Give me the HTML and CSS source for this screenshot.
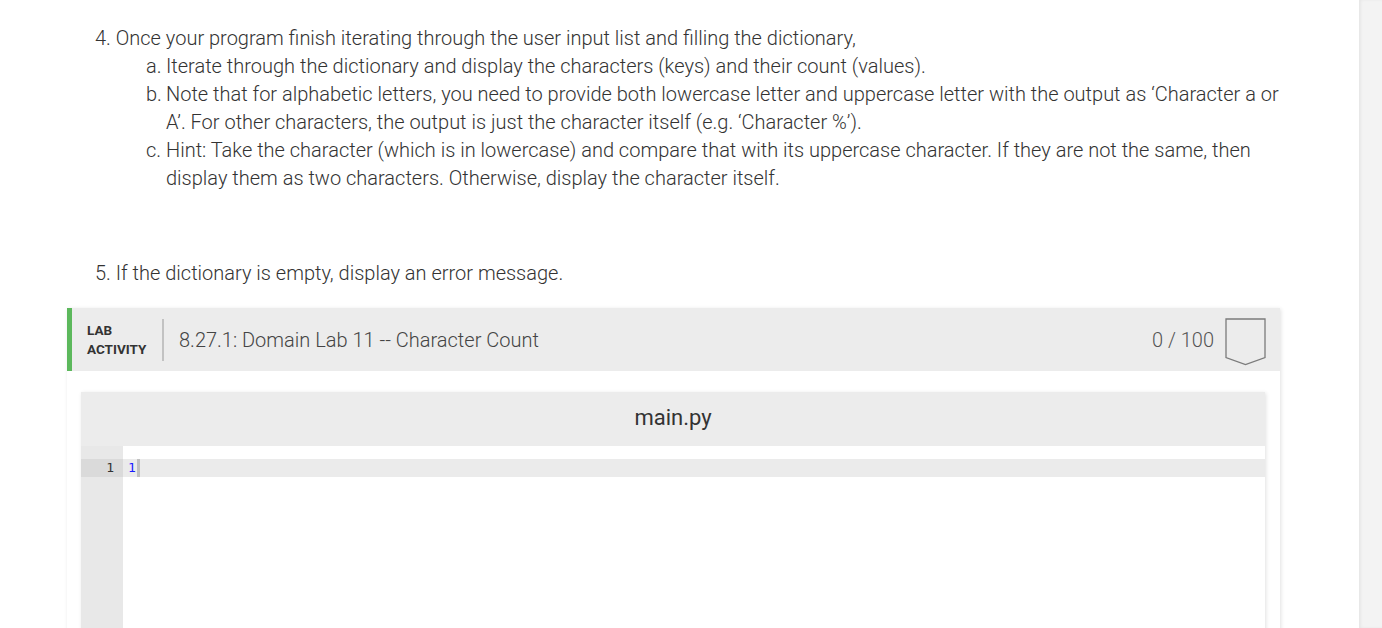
FILE: index.html
```html
<!DOCTYPE html>
<html>
<head>
<meta charset="utf-8">
<link rel="stylesheet" href="styles.css">
</head>
<body>
<div class="page">
  <main class="main">
    <div class="instructions">
      <div class="step">4. Once your program finish iterating through the user input list and filling the dictionary,</div>
      <div class="sub">
        <div class="sub-item"><span class="mk">a.</span><span class="tx">Iterate through the dictionary and display the characters (keys) and their count (values).</span></div>
        <div class="sub-item"><span class="mk">b.</span><span class="tx">Note that for alphabetic letters, you need to provide both lowercase letter and uppercase letter with the output as ‘Character a or A’. For other characters, the output is just the character itself (e.g. ‘Character %’).</span></div>
        <div class="sub-item"><span class="mk">c.</span><span class="tx">Hint: Take the character (which is in lowercase) and compare that with its uppercase character. If they are not the same, then display them as two characters. Otherwise, display the character itself.</span></div>
      </div>
      <div class="step step5">5. If the dictionary is empty, display an error message.</div>
    </div>

    <section class="card">
      <header class="card-head">
        <div class="label">LAB<br>ACTIVITY</div>
        <div class="divider"></div>
        <div class="title">8.27.1: Domain Lab 11 -- Character Count</div>
        <div class="score">0 / 100</div>
        <svg class="badge" width="42" height="48" viewBox="0 0 42 48">
          <path d="M1 1 H40 V39.5 L20.5 46.5 L1 39.5 Z" fill="none" stroke="#7b7b7b" stroke-width="1.3"/>
        </svg>
      </header>
      <div class="card-body">
        <div class="editor">
          <div class="editor-head">main.py</div>
          <div class="code">
            <div class="gutter">
              <div class="gutter-pad"></div>
              <div class="ln active">1</div>
            </div>
            <div class="lines">
              <div class="gutter-pad"></div>
              <div class="line active"><span class="num">1</span><span class="cursor"></span></div>
            </div>
          </div>
        </div>
      </div>
    </section>
  </main>
  <aside class="side"></aside>
</div>
</body>
</html>
```

FILE: styles.css
```css
html, body {
  margin: 0;
  padding: 0;
  background: #ffffff;
}
body {
  font-family: Roboto, "Liberation Sans", sans-serif;
  color: #333333;
  overflow: hidden;
  height: 628px;
}
.page {
  display: flex;
  height: 628px;
}
.main {
  flex: 1;
  padding: 24px 0 0 67px;
}
.side {
  width: 23px;
  background: #f3f3f3;
  box-shadow: inset 2px 0 3px rgba(0, 0, 0, 0.05);
}
.instructions {
  width: 1213px;
  font-size: 20px;
  font-weight: 300;
  line-height: 28px;
  color: #333333;
}
.step {
  padding-left: 28px;
}
.sub {
  padding-left: 79px;
}
.sub-item {
  display: flex;
}
.mk {
  width: 20px;
  flex: none;
}
.tx {
  flex: 1;
}
.step5 {
  margin-top: 67px;
}
.card {
  width: 1213px;
  margin-top: 21px;
  box-shadow: 1px 1px 4px rgba(0, 0, 0, 0.12);
  background: #fff;
}
.card-head {
  display: flex;
  align-items: center;
  height: 63px;
  background: #ececec;
  border-left: 5px solid #5cb85c;
  padding: 0 13px 0 15px;
}
.label {
  font-size: 13.5px;
  font-weight: 700;
  line-height: 19px;
  color: #333;
  width: 75px;
}
.divider {
  width: 2px;
  height: 42px;
  background: #c2c2c2;
  margin-right: 15px;
}
.title {
  flex: 1;
  font-size: 20px;
  font-weight: 300;
  color: #444;
}
.score {
  font-size: 20px;
  font-weight: 300;
  color: #555;
  margin-right: 11px;
}
.badge {
  display: block;
  margin-top: 4px;
}
.card-body {
  padding: 21px 15px 0 14px;
  height: 300px;
}
.editor {
  box-shadow: 1px 1px 4px rgba(0, 0, 0, 0.12);
  height: 300px;
  background: #fff;
}
.editor-head {
  height: 54px;
  padding-bottom: 3px;
  box-sizing: border-box;
  background: #ececec;
  font-size: 22px;
  font-weight: 400;
  color: #333;
  display: flex;
  align-items: center;
  justify-content: center;
}
.code {
  display: flex;
  height: 246px;
  font-family: "DejaVu Sans Mono", "Liberation Mono", monospace;
  font-size: 13px;
}
.gutter {
  width: 42px;
  background: #e8e8e8;
}
.gutter-pad {
  height: 13px;
}
.ln {
  height: 18px;
  line-height: 18px;
  text-align: right;
  padding-right: 9px;
  color: #333;
}
.ln.active {
  background: #dadada;
}
.lines {
  flex: 1;
}
.line {
  height: 18px;
  line-height: 18px;
  padding-left: 5px;
  display: flex;
  align-items: center;
}
.line.active {
  background: #ebebeb;
}
.num {
  color: #1a1aff;
}
.cursor {
  display: inline-block;
  width: 3px;
  height: 18px;
  background: #c0c0c0;
  margin-left: 1px;
}
```
